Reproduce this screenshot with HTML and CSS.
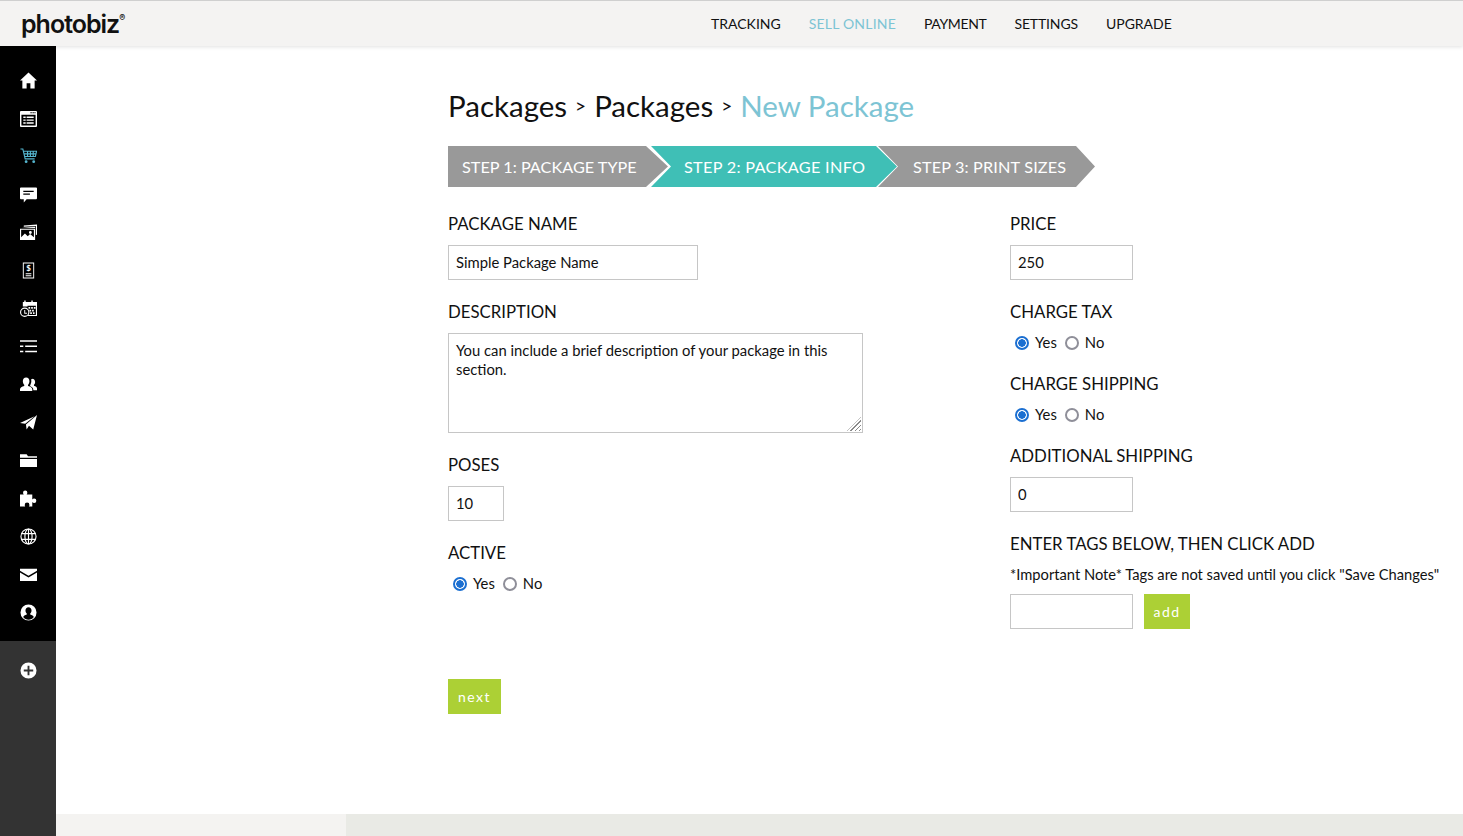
FILE: index.html
```html
<!DOCTYPE html>
<html lang="en">
<head>
<meta charset="utf-8">
<title>New Package</title>
<link rel="stylesheet" href="styles.css">
</head>
<body>
<header class="topbar">
  <div class="logo">photobiz<sup class="reg">®</sup></div>
  <nav class="topnav">
    <a>TRACKING</a>
    <a class="is-active">SELL ONLINE</a>
    <a class="tight">PAYMENT</a>
    <a class="snug">SETTINGS</a>
    <a>UPGRADE</a>
  </nav>
</header>
<div class="shell">
  <aside class="sidebar">
    <ul class="side-main">
      <li><svg viewBox="0 0 18 18"><path d="M9 .5 18 9h-2.500v8.500h-4.500v-5.500h-4v5.500h-4.500V9H0z"/></svg></li>
      <li><svg viewBox="0 0 18 18"><path fill-rule="evenodd" d="M1 1h16a1 1 0 0 1 1 1v15a1 1 0 0 1-1 1H1a1 1 0 0 1-1-1V2a1 1 0 0 1 1-1zm.5 4v11.500h15V5zM11 2.500h1.500V3.500H11zm2.200 0h1.500V3.500h-1.500zm2 0h1.300V3.500h-1.300zM3.500 7H6v1.500H3.500zm3.500 0h7.500v1.500H7zM3.500 10H6v1.500H3.500zm3.500 0h7.500v1.500H7zM3.500 13H6v1.500H3.500zm3.500 0h7.500v1.500H7z"/></svg></li>
      <li class="is-cart"><svg viewBox="0 0 18 18"><path fill="none" stroke="currentColor" stroke-width="1.200" d="M.5 1H3l2.500 10.500h10M3.600 3.500H17.500l-1.200 5.500H5M8 3.500v5.500M11 3.500v5.500M14 3.500v5.500M4.500 6.200h12.500"/><circle cx="6.500" cy="14.500" r="1.500" fill="currentColor"/><circle cx="14.500" cy="14.500" r="1.500" fill="currentColor"/></svg></li>
      <li><svg viewBox="0 0 18 18"><path fill-rule="evenodd" d="M1 1.500h16a1 1 0 0 1 1 1V13a1 1 0 0 1-1 1H7l-3 3.500V14H1a1 1 0 0 1-1-1V2.500a1 1 0 0 1 1-1zM3.500 5v1.300h11V5zm0 3v1.300h7V8z"/></svg></li>
      <li><svg viewBox="0 0 18 18"><path fill-rule="evenodd" d="M4 1.500 18 .5v11l-1.200.1V2L4 2.800zM2 3.800 16 3v1.200zM0 5h16v12H0zm1.200 1.200v7.800l4-4 3 3 2.500-2.500 4 3.500V6.200zM11 7.500a1.500 1.500 0 1 1 0 3 1.500 1.500 0 0 1 0-3z"/></svg></li>
      <li><svg viewBox="0 0 18 18"><path fill-rule="evenodd" d="M3 .5h12v17H3zm1 1v15h10v-15zM6 12h6v1H6zm0 2h6v1H6z"/><text x="9" y="10" class="glyph">$</text></svg></li>
      <li><svg viewBox="0 0 18 18"><path fill-rule="evenodd" d="M3 2h1.500V.5H6V2h6V.5h1.500V2H18v15H8.500v-1.200H16.800V6H8V7H3zM9 7.500h1.800v1.800H9zm2.800 0h1.800v1.800h-1.800zm2.800 0h1.800v1.800h-1.800zM10 10.300h1.800v1.800H10zm2.800 0h1.800v1.800h-1.800zm-2 2.800h1.800v1.800h-1.800zm2.800 0h1.800v1.800h-1.600z"/><path fill-rule="evenodd" d="M5 8a5 5 0 1 1 0 10 5 5 0 0 1 0-10zm0 1.200a3.800 3.800 0 1 0 0 7.600 3.800 3.800 0 0 0 0-7.600zM4.500 10.500h1v3h2v1h-3z"/></svg></li>
      <li><svg viewBox="0 0 18 18"><path d="M0 2.500h18v1.500H0zM0 8h3.500v1.500H0zm5.500 0H18v1.500H5.500zM0 13.500h3.500V15H0zm5.500 0H18V15H5.500z"/></svg></li>
      <li><svg viewBox="0 0 18 18"><path d="M6.500 1.500c2.200 0 3.500 1.800 3.500 4 0 1.600-.7 3-1.500 3.700v1.300c2.500.8 4.500 1.800 4.500 3.500v2H0v-2c0-1.700 2-2.700 4.500-3.500V9.200C3.700 8.500 3 7.100 3 5.500c0-2.200 1.300-4 3.500-4z"/><path d="M13 3c1.800 0 3 1.500 3 3.300 0 1.300-.5 2.400-1.200 3v1.100c1.800.6 3.200 1.400 3.200 2.900V15h-3.800c0-2.300-1.800-3.500-3.700-4.300.3-.6.500-1.300.7-2 .5-.9.800-1.900.8-3.100 0-.7-.1-1.300-.3-1.800.5-.5 1.200-.8 2.300-.8z"/></svg></li>
      <li><svg viewBox="0 0 18 18"><path d="M18 1 14 16.500 9.500 12.500 7 16.500 6.300 11zM0 9.500 15.500 2.500 5.500 10.200z"/></svg></li>
      <li><svg viewBox="0 0 18 18"><path d="M0 2.500h7l1.500 2H18V6H0zM0 7.500h18V16H0z"/></svg></li>
      <li><svg viewBox="0 0 18 18"><path d="M5.500 .5a2.300 2.300 0 0 1 2.300 2.300c0 .9-.4 1.400-.8 2H13v5.200c.5-.6 1.200-.9 2-.9a2.300 2.300 0 0 1 0 4.600c-.8 0-1.500-.3-2-.9V17.500H9.500c.3-.6.5-1.100.5-1.700a2.500 2.500 0 0 0-5 0c0 .6.2 1.100.5 1.700H0V4.800h4c-.4-.6-.8-1.100-.8-2A2.300 2.300 0 0 1 5.500.5z"/></svg></li>
      <li><svg viewBox="0 0 18 18"><g fill="none" stroke="currentColor" stroke-width="1.200"><circle cx="9" cy="9" r="8"/><ellipse cx="9" cy="9" rx="3.800" ry="8"/><path d="M9 1v16M1.500 6h15M1.500 12h15"/></g></svg></li>
      <li><svg viewBox="0 0 18 18"><path d="M0 3h18v2l-9 5.200L0 5zM0 7l9 5.200L18 7v9H0z"/></svg></li>
      <li><svg viewBox="0 0 18 18"><path fill-rule="evenodd" d="M9 .5a8.500 8.500 0 1 1 0 17 8.500 8.500 0 0 1 0-17zm0 3c-2 0-3.200 1.500-3.200 3.500 0 1.300.6 2.500 1.400 3.100v1c-2 .6-3.400 1.300-3.800 2.700a6.800 6.800 0 0 0 11.200 0c-.4-1.400-1.800-2.100-3.800-2.700v-1c.8-.6 1.400-1.800 1.400-3.100 0-2-1.200-3.500-3.200-3.500z"/></svg></li>
    </ul>
    <ul class="side-extra">
      <li><svg viewBox="0 0 18 18"><path fill-rule="evenodd" d="M9 .5a8.500 8.500 0 1 1 0 17 8.500 8.500 0 0 1 0-17zM8 4v4H4v2h4v4h2v-4h4V8h-4V4z"/></svg></li>
    </ul>
  </aside>
  <div class="page">
    <main class="content">
      <h1 class="crumbs">
        <span>Packages</span><span class="sep">&gt;</span><span>Packages</span><span class="sep">&gt;</span><span class="current">New Package</span>
      </h1>
      <ol class="steps">
        <li class="step step-first">STEP 1: PACKAGE TYPE</li>
        <li class="step step-active">STEP 2: PACKAGE INFO</li>
        <li class="step step-last">STEP 3: PRINT SIZES</li>
      </ol>
      <form class="form">
        <div class="col">
          <div class="field">
            <label class="label">PACKAGE NAME</label>
            <input class="input w-name" type="text" value="Simple Package Name">
          </div>
          <div class="field">
            <label class="label">DESCRIPTION</label>
            <div class="area-wrap">
              <textarea class="input area">You can include a brief description of your package in this section.</textarea>
            </div>
          </div>
          <div class="field">
            <label class="label">POSES</label>
            <input class="input w-poses" type="text" value="10">
          </div>
          <div class="field">
            <label class="label">ACTIVE</label>
            <div class="radios">
              <label class="radio"><input type="radio" name="active" checked>Yes</label>
              <label class="radio"><input type="radio" name="active">No</label>
            </div>
          </div>
          <button class="btn btn-next" type="button">next</button>
        </div>
        <div class="col">
          <div class="field">
            <label class="label">PRICE</label>
            <input class="input w-small" type="text" value="250">
          </div>
          <div class="field field-radio">
            <label class="label">CHARGE TAX</label>
            <div class="radios">
              <label class="radio"><input type="radio" name="tax" checked>Yes</label>
              <label class="radio"><input type="radio" name="tax">No</label>
            </div>
          </div>
          <div class="field field-radio">
            <label class="label">CHARGE SHIPPING</label>
            <div class="radios">
              <label class="radio"><input type="radio" name="ship" checked>Yes</label>
              <label class="radio"><input type="radio" name="ship">No</label>
            </div>
          </div>
          <div class="field">
            <label class="label">ADDITIONAL SHIPPING</label>
            <input class="input w-small" type="text" value="0">
          </div>
          <div class="field">
            <label class="label">ENTER TAGS BELOW, THEN CLICK ADD</label>
            <p class="note">*Important Note* Tags are not saved until you click "Save Changes"</p>
            <div class="tag-row">
              <input class="input w-small" type="text">
              <button class="btn btn-add" type="button">add</button>
            </div>
          </div>
        </div>
      </form>
    </main>
    <footer class="footer">
      <div class="foot-left"></div>
      <div class="foot-right"></div>
    </footer>
  </div>
</div>
</body>
</html>
```
FILE: styles.css
```css
* { box-sizing: border-box; }
html, body { margin: 0; height: 100%; }
body {
  display: flex;
  flex-direction: column;
  height: 836px;
  overflow: hidden;
  font-family: "Lato", "Liberation Sans", sans-serif;
  color: #111;
  background: #fff;
}
.topbar {
  position: relative;
  z-index: 2;
  flex: 0 0 46px;
  display: flex;
  align-items: center;
  padding-left: 21px;
  background: #f4f3f2;
  border-top: 1px solid #cfcfcf;
  box-shadow: 0 1px 4px rgba(0, 0, 0, .12);
}
.logo {
  width: 690px;
  font-family: "Inter", sans-serif;
  font-size: 25px;
  font-weight: 600;
  letter-spacing: -1px;
  line-height: 44px;
  color: #111;
}
.reg { font-size: 9px; vertical-align: 12px; line-height: 0; letter-spacing: 0; }
.topnav { display: flex; gap: 28px; font-size: 14px; }
.topnav .is-active { color: #7dc4d4; letter-spacing: .2px; }
.topnav .tight { letter-spacing: -.35px; }
.topnav .snug { letter-spacing: -.15px; }
.shell { flex: 1; display: flex; min-height: 0; }
.sidebar {
  flex: 0 0 56px;
  display: flex;
  flex-direction: column;
  background: #333;
  color: #fff;
}
.sidebar ul { list-style: none; margin: 0; padding: 0; }
.sidebar li { height: 38px; padding-left: 1px; display: flex; align-items: center; justify-content: center; }
.sidebar svg { width: 17px; height: 17px; fill: currentColor; }
.glyph { font-size: 8.500px; font-weight: 700; text-anchor: middle; font-family: "Lato", sans-serif; }
.side-main { background: #000; padding: 15px 0 10px !important; }
.side-extra { padding-top: 10px !important; }
.is-cart { color: #55b6cf; }
.page { flex: 1; min-width: 0; display: flex; flex-direction: column; }
.content { flex: 1; padding: 43px 0 0 392px; }
.crumbs {
  display: flex;
  align-items: center;
  margin: 0 0 21px;
  height: 36px;
  padding-bottom: 2px;
  font-size: 29.500px;
  font-weight: 400;
  line-height: 34px;
}
.sep { font-size: 19px; margin: 0 8px; }
.current { color: #7dc4d4; }
.steps { display: flex; list-style: none; margin: 0 0 27px; padding: 0; height: 41px; }
.step {
  height: 41px;
  line-height: 41px;
  font-size: 16.250px;
  color: #fff;
  background: #999;
  white-space: nowrap;
}
.step-first {
  width: 220px;
  padding-left: 14px;
  clip-path: polygon(0 0, 198px 0, 100% 50%, 198px 100%, 0 100%);
}
.step-active {
  width: 246px;
  margin-left: -17px;
  padding-left: 33px;
  letter-spacing: .3px;
  background: #3fbfb6;
  clip-path: polygon(0 0, 225px 0, 100% 50%, 225px 100%, 0 100%, 20px 50%);
}
.step-last {
  width: 217px;
  margin-left: -19px;
  padding-left: 35px;
  letter-spacing: .15px;
  clip-path: polygon(0 0, 198px 0, 100% 50%, 198px 100%, 0 100%, 20px 50%);
}
.form { display: grid; grid-template-columns: 562px 1fr; }
.field { margin-bottom: 22px; }
.field-radio { margin-bottom: 21px; }
.label {
  display: block;
  height: 21px;
  margin-bottom: 10px;
  font-size: 16.800px;
  line-height: 19px;
}
.input {
  display: block;
  height: 35px;
  padding: 0 7px 2px;
  border: 1px solid #c6c6c6;
  border-radius: 0;
  background: #fff;
  font: 14.800px/19px "Lato", sans-serif;
  color: #111;
  outline: 0;
}
.w-name { width: 250px; }
.w-small { width: 123px; }
.w-poses { width: 56px; }
.area-wrap { position: relative; width: 415px; }
.area-wrap::after {
  content: "";
  position: absolute;
  right: 2px;
  bottom: 2px;
  width: 14px;
  height: 14px;
  background: repeating-linear-gradient(135deg, #8a8a8a 0 1px, #fff 1px 3px);
  clip-path: polygon(100% 0, 100% 100%, 0 100%);
}
.area { width: 415px; height: 100px; padding: 7px 7px; resize: none; }
.radios { display: flex; align-items: center; height: 20px; gap: 8px; padding-left: 5px; }
.radio { display: flex; align-items: center; gap: 6px; padding-bottom: 2px; font-size: 14.800px; }
.radio input {
  appearance: none;
  width: 14px;
  height: 14px;
  margin: 2px 0 0;
  border: 2px solid #8f8f99;
  border-radius: 50%;
  background: #fff;
}
.radio input:checked { border-color: #1b6fd1; background: radial-gradient(circle, #1b6fd1 0 3.500px, #fff 4px); }
.btn {
  display: block;
  height: 35px;
  padding: 0;
  border: 0;
  background: #acd035;
  color: #fff;
  font: 14px/35px "Lato", sans-serif;
  letter-spacing: 1.500px;
}
.btn-next { width: 53px; margin-top: 85px; }
.btn-add { width: 46px; }
.note { margin: -1px 0 10px; font-size: 14.700px; line-height: 20px; white-space: nowrap; }
.tag-row { display: flex; gap: 11px; }
.footer { flex: 0 0 22px; display: flex; }
.foot-left { flex: 0 0 290px; background: #f4f3f1; }
.foot-right { flex: 1; background: #e9eae5; }
```
